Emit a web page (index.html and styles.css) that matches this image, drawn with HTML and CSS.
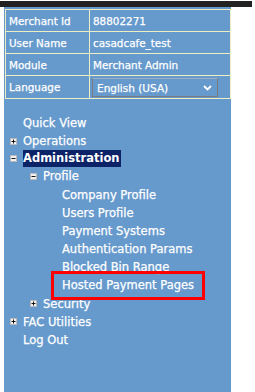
FILE: index.html
```html
<!DOCTYPE html>
<html lang="en">
<head>
<meta charset="utf-8">
<title>Merchant Admin</title>
<link rel="stylesheet" href="styles.css">
</head>
<body>
<div class="topbar"></div>
<div class="panel">
  <div class="info">
    <div class="cell r1">Merchant Id</div><div class="cell r1">88802271</div>
    <div class="cell r2">User Name</div><div class="cell r2">casadcafe_test</div>
    <div class="cell r3">Module</div><div class="cell r3">Merchant Admin</div>
    <div class="cell r4">Language</div>
    <div class="cell r4">
      <div class="select"><span>English (USA)</span>
        <svg class="chev" width="9" height="6" viewBox="0 0 9 6"><path d="M1 1l3.5 3.5L8 1" fill="none" stroke="#fff" stroke-width="1.8"/></svg>
      </div>
    </div>
  </div>
  <nav class="menu">
    <div class="row lvl0"><span class="ph"></span>Quick View</div>
    <div class="row lvl0"><svg class="ico" width="7" height="7" viewBox="0 0 7 7"><rect x="0.5" y="0.5" width="6" height="6" fill="#f2f2f2" stroke="#b8b8b8"/><path d="M1.5 3.5h4M3.5 1.5v4" stroke="#111"/></svg>Operations</div>
    <div class="row lvl0"><svg class="ico" width="7" height="7" viewBox="0 0 7 7"><rect x="0.5" y="0.5" width="6" height="6" fill="#f2f2f2" stroke="#b8b8b8"/><path d="M1.5 3.5h4" stroke="#111"/></svg><span class="hl">Administration</span></div>
    <div class="row lvl1"><svg class="ico" width="7" height="7" viewBox="0 0 7 7"><rect x="0.5" y="0.5" width="6" height="6" fill="#f2f2f2" stroke="#b8b8b8"/><path d="M1.5 3.5h4" stroke="#111"/></svg>Profile</div>
    <div class="row lvl2"><span class="ph"></span>Company Profile</div>
    <div class="row lvl2"><span class="ph"></span>Users Profile</div>
    <div class="row lvl2"><span class="ph"></span>Payment Systems</div>
    <div class="row lvl2"><span class="ph"></span>Authentication Params</div>
    <div class="row lvl2"><span class="ph"></span>Blocked Bin Range</div>
    <div class="row lvl2"><span class="ph"></span><span class="marked">Hosted Payment Pages</span></div>
    <div class="row lvl1"><svg class="ico" width="7" height="7" viewBox="0 0 7 7"><rect x="0.5" y="0.5" width="6" height="6" fill="#f2f2f2" stroke="#b8b8b8"/><path d="M1.5 3.5h4M3.5 1.5v4" stroke="#111"/></svg>Security</div>
    <div class="row lvl0"><svg class="ico" width="7" height="7" viewBox="0 0 7 7"><rect x="0.5" y="0.5" width="6" height="6" fill="#f2f2f2" stroke="#b8b8b8"/><path d="M1.5 3.5h4M3.5 1.5v4" stroke="#111"/></svg>FAC Utilities</div>
    <div class="row lvl0"><span class="ph"></span>Log Out</div>
  </nav>
</div>
</body>
</html>
```
FILE: styles.css
```css
html, body {
  margin: 0;
  padding: 0;
  background: #ffffff;
}
body {
  font-family: "DejaVu Sans", Verdana, sans-serif;
  color: #ffffff;
  overflow: hidden;
  -webkit-text-stroke: 0.25px #ffffff;
}
.topbar {
  margin-top: 1px;
  width: 252px;
  height: 6px;
  background: #222222;
}
.panel {
  margin-left: 4px;
  width: 227px;
  min-height: 385px;
  background: #6699cc;
  padding-top: 2px;
  box-sizing: border-box;
}
.info {
  margin-left: 1px;
  width: 226px;
  display: grid;
  grid-template-columns: 84px 141px;
  border-top: 1px solid #eeeec4;
  border-left: 1px solid #eeeec4;
  font-size: 10.4px;
}
.cell {
  box-sizing: border-box;
  border-right: 1px solid #eeeec4;
  border-bottom: 1px solid #eeeec4;
  padding-left: 3px;
  display: flex;
  align-items: center;
  height: 22px;
  white-space: nowrap;
}
.cell.r4 {
  height: 23px;
}
.select {
  box-sizing: border-box;
  width: 126px;
  height: 19px;
  margin-left: -1px;
  margin-top: 1px;
  border: 1px solid #7c7c80;
  border-top-color: #9aaec4;
  display: flex;
  align-items: center;
  justify-content: space-between;
  padding: 0 5px 0 4px;
  font-size: 10.5px;
}
.chev {
  display: block;
}
.menu {
  margin-top: 15px;
  font-size: 11.5px;
  line-height: 18.17px;
}
.row {
  display: flex;
  align-items: center;
  white-space: nowrap;
}
.lvl0 { padding-left: 6px; }
.lvl1 { padding-left: 26px; }
.lvl2 { padding-left: 45px; }
.ico, .ph {
  display: block;
  flex: none;
  width: 7px;
  height: 7px;
  margin-right: 6px;
}
.hl {
  display: inline-block;
  line-height: 17px;
  background: #0c2368;
  font-weight: bold;
  padding: 0 1px 0 0;
  -webkit-text-stroke: 0;
}
.marked {
  position: relative;
}
.marked::after {
  content: "";
  position: absolute;
  top: -5px;
  bottom: -5px;
  left: -11px;
  width: 154px;
  border: 3px solid #ff0000;
  box-sizing: border-box;
}
```
